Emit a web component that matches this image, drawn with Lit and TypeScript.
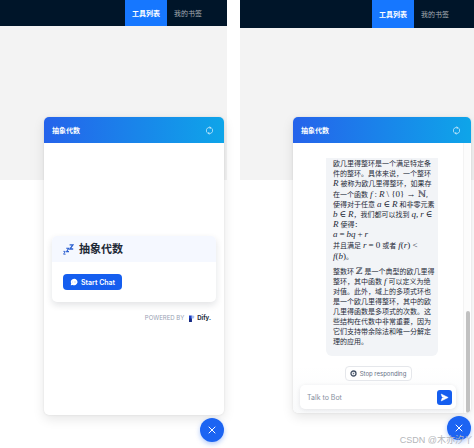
import { LitElement, html, css, svg } from "lit";
import { customElement, property } from "lit/decorators.js";

const refreshIcon = svg`<path d="M1.9 6.8A4.1 4.1 0 0 1 7.6 2.2M10.1 5.2A4.1 4.1 0 0 1 4.4 9.8M6.6 1l1.3 1.3-1.3 1.3M5.4 8.4L4.1 9.7l1.3 1.3M9.2 3.4l.6 1M2.8 8.6l-.6-1" fill="none" stroke="#fff" stroke-opacity=".9" stroke-width=".9" stroke-linecap="round"/>`;

@customElement("chat-widget")
export class ChatWidget extends LitElement {
  @property() heading = "";

  static styles = css`
    :host {
      display: flex;
      flex-direction: column;
      align-items: flex-end;
      gap: 3px;
    }
    .panel {
      flex: 1;
      width: 100%;
      box-sizing: border-box;
      display: flex;
      flex-direction: column;
      min-height: 0;
      overflow: hidden;
      background: #fff;
      border-radius: 5px;
      box-shadow: 0 4px 12px rgba(0, 0, 0, 0.1), 0 0 2px rgba(0, 0, 0, 0.1);
    }
    .bar {
      display: flex;
      align-items: center;
      justify-content: space-between;
      height: 26px;
      flex: none;
      padding: 0 10px 0 8px;
      color: #fff;
      background: linear-gradient(to right, #2563eb, #0ea5e9);
    }
    h2 {
      margin: 0;
      font-size: 7px;
      font-weight: 700;
    }
    button {
      padding: 0;
      border: 0;
      background: none;
      display: grid;
      place-items: center;
    }
    .body {
      flex: 1;
      min-height: 0;
      display: flex;
      flex-direction: column;
    }
    .close {
      width: 24px;
      height: 24px;
      flex: none;
      border-radius: 50%;
      background: #1c64f2;
      box-shadow: 0 2px 5px rgba(28, 100, 242, 0.35);
    }
  `;

  render() {
    return html`
      <section class="panel">
        <header class="bar">
          <h2>${this.heading}</h2>
          <button aria-label="Restart">
            <svg width="9" height="9" viewBox="0 0 12 12">${refreshIcon}</svg>
          </button>
        </header>
        <div class="body"><slot></slot></div>
      </section>
      <button class="close" aria-label="Close chat">
        <svg width="8" height="8" viewBox="0 0 8 8">
          <path d="M1 1l6 6M7 1L1 7" stroke="#fff" stroke-width="1" stroke-linecap="round" />
        </svg>
      </button>
    `;
  }
}

@customElement("app-root")
export class AppRoot extends LitElement {
  static styles = css`
    :host {
      display: grid;
      grid-template-columns: 227fr 234fr;
      gap: 13px;
      min-height: 100vh;
      background: #fff;
      font-family: Inter, "Noto Sans CJK SC", sans-serif;
    }
    .screen {
      position: relative;
      min-width: 0;
    }
    nav {
      display: flex;
      justify-content: flex-end;
      height: 26px;
      padding-right: 18px;
      background: #001529;
    }
    .second nav {
      height: 28px;
    }
    nav a {
      display: flex;
      align-items: center;
      padding: 0 7px;
      font-size: 7px;
      color: #a6adb4;
      text-decoration: none;
    }
    nav a.active {
      color: #fff;
      font-weight: 700;
      background: #1677ff;
    }
    .backdrop {
      height: 154px;
      background: #f3f3f3;
    }
    .second .backdrop {
      height: 152px;
    }
    chat-widget {
      position: absolute;
      inset: 117px 3px 6px 44px;
    }
    .second chat-widget {
      inset: 117px 3px 8px 53px;
    }
    button {
      font-family: inherit;
      border: 0;
      padding: 0;
    }

    .welcome {
      margin: auto 8px;
    }
    .card {
      border-radius: 5px;
      overflow: hidden;
      box-shadow: 0 3px 7px rgba(16, 24, 40, 0.12);
    }
    .card-head {
      display: flex;
      align-items: center;
      gap: 5px;
      height: 26px;
      padding: 0 11px;
      background: #f5f8ff;
    }
    h1 {
      margin: 0;
      font-size: 11px;
      line-height: 16px;
      font-weight: 600;
      color: #1f2a37;
    }
    .card-body {
      padding: 12px 11px;
    }
    .start {
      display: flex;
      align-items: center;
      justify-content: center;
      gap: 3px;
      width: 59px;
      height: 16px;
      border-radius: 4px;
      background: #155eef;
      color: #fff;
      font-size: 7px;
      font-weight: 600;
      white-space: nowrap;
    }
    .powered {
      display: flex;
      justify-content: flex-end;
      align-items: center;
      gap: 5px;
      margin-top: 12px;
      padding-right: 5px;
      font-size: 6px;
      line-height: 8px;
      color: #98a2b3;
    }
    .powered a {
      display: flex;
      align-items: center;
      gap: 2px;
      color: #1d2939;
      font-weight: 700;
      text-decoration: none;
    }

    .row {
      display: flex;
      flex: 1;
      min-height: 0;
    }
    .main {
      flex: 1;
      min-width: 0;
      min-height: 0;
      display: flex;
      flex-direction: column;
    }
    .log {
      flex: 1;
      min-height: 0;
      display: flex;
      padding-top: 15px;
    }
    .bubble {
      flex: 1;
      align-self: flex-start;
      margin: 0 25px 0 33px;
      padding: 1px 0 9px 7px;
      border-radius: 0 0 6px 6px;
      background: #f2f4f7;
      color: #1f2a37;
      font-size: 7px;
      line-height: 10px;
      white-space: nowrap;
    }
    .bubble p {
      margin: 0 0 5px;
    }
    .bubble p:last-child {
      margin: 0;
    }
    .line {
      display: block;
      height: 10px;
    }
    .line.tall {
      height: 11px;
      line-height: 11px;
    }
    .bubble i,
    .bubble b {
      font-family: "Liberation Serif", "DejaVu Serif", serif;
      font-size: 9px;
      line-height: 8px;
      font-weight: 400;
    }
    .track {
      display: flex;
      align-items: flex-end;
      width: 7px;
      margin-right: 1px;
      border-left: 1px solid #f3f3f3;
      box-sizing: border-box;
      background: #fcfcfc;
    }
    .thumb {
      width: 4px;
      height: 102px;
      margin-left: 2px;
      border-radius: 2px;
      background: #c1c1c1;
    }
    .composer {
      display: flex;
      flex-direction: column;
      align-items: center;
      gap: 4px;
      padding: 0 7px 4px;
      background: linear-gradient(to bottom, #fff, #f9fafb);
    }
    .stop {
      display: flex;
      align-items: center;
      justify-content: center;
      gap: 3px;
      width: 67px;
      height: 15px;
      box-sizing: border-box;
      border: 1px solid #e5e7eb;
      border-radius: 4px;
      background: #fff;
      color: #667085;
      font-size: 6px;
      white-space: nowrap;
    }
    .ask {
      display: flex;
      align-items: center;
      align-self: stretch;
      height: 24px;
      padding: 0 4px 0 7px;
      border-radius: 5px;
      background: #fff;
      box-shadow: 0 1px 4px rgba(16, 24, 40, 0.1);
    }
    .ask input {
      flex: 1;
      min-width: 0;
      padding: 0;
      border: 0;
      outline: 0;
      background: none;
      font: 7px Inter, sans-serif;
    }
    .ask input::placeholder {
      color: #8790a0;
    }
    .send {
      display: grid;
      place-items: center;
      width: 15px;
      height: 15px;
      border-radius: 3px;
      background: #155eef;
    }
    .mark {
      position: absolute;
      right: 1px;
      bottom: 1px;
      font: 9px/13px "Liberation Sans", "Noto Sans CJK SC", sans-serif;
      color: #b4b6ba;
      white-space: nowrap;
    }
  `;

  private nav() {
    return html`<nav><a class="active" href="#tools">工具列表</a><a href="#bookmarks">我的书签</a></nav>
      <div class="backdrop"></div>`;
  }

  render() {
    return html`
      <div class="screen">
        ${this.nav()}
        <chat-widget heading="抽象代数">
          <div class="welcome">
            <div class="card">
              <div class="card-head">
                <svg width="11" height="11" viewBox="0 0 11 11" fill="none" stroke="#2b5fd0">
                  <path d="M6.6 .8h3.3L6.9 5h3.3" stroke-width="1.3" />
                  <path d="M3.2 4.2h2.5L3.6 7.6H6" stroke-width="1.1" />
                  <path d="M.4 7.4h1.8L.6 10.2h2" stroke-width=".9" />
                </svg>
                <h1>抽象代数</h1>
              </div>
              <div class="card-body">
                <button class="start">
                  <svg width="8" height="8" viewBox="0 0 8 8">
                    <path d="M4.1.7a3.3 3.3 0 1 1-1.5 6.2L.7 7.3l.5-1.8A3.3 3.3 0 0 1 4.1.7z" fill="#fff" />
                    <path d="M2.6 4h.4M4 4h.4M5.4 4h.4" stroke="#155eef" stroke-width=".6" />
                  </svg>
                  Start Chat
                </button>
              </div>
            </div>
            <div class="powered">
              POWERED BY
              <a href="#dify">
                <svg width="6" height="7" viewBox="0 0 6 7">
                  <path d="M0 .5h2.8V7H0z" fill="#1d3fc4" />
                  <path d="M0 3.5h2.8V7H0z" fill="#172a80" />
                  <path d="M2.8.5h1.4A1.4 1.4 0 0 1 5.4 2L4.6 3.6H2.8z" fill="#a9c3f5" />
                </svg>
                Dify.
              </a>
            </div>
          </div>
        </chat-widget>
      </div>

      <div class="screen second">
        ${this.nav()}
        <chat-widget heading="抽象代数">
          <div class="row">
            <div class="main">
              <div class="log">
                <article class="bubble">
                  <p>
                    <span class="line">欧几里得整环是一个满足特定条</span>
                    <span class="line">件的整环。具体来说，一个整环</span>
                    <span class="line"><i>R</i> 被称为欧几里得整环，如果存</span>
                    <span class="line tall">在一个函数 <i>f</i> <b>:</b> <i>R</i> <b>\\ {0} → ℕ</b>,</span>
                    <span class="line">使得对于任意 <i>a</i> <b>∈</b> <i>R</i> 和非零元素</span>
                    <span class="line"><i>b</i> <b>∈</b> <i>R</i>，我们都可以找到 <i>q</i><b>,</b> <i>r</i> <b>∈</b></span>
                    <span class="line"><i>R</i> 使得：</span>
                    <span class="line"><i>a</i> <b>=</b> <i>bq</i> <b>+</b> <i>r</i></span>
                    <span class="line tall">并且满足 <i>r</i> <b>= 0</b> 或者 <i>f</i><b>(</b><i>r</i><b>) &lt;</b></span>
                    <span class="line tall"><i>f</i><b>(</b><i>b</i><b>)</b>。</span>
                  </p>
                  <p>
                    <span class="line">整数环 <b>ℤ</b> 是一个典型的欧几里得</span>
                    <span class="line">整环，其中函数 <i>f</i> 可以定义为绝</span>
                    <span class="line">对值。此外，域上的多项式环也</span>
                    <span class="line">是一个欧几里得整环，其中的欧</span>
                    <span class="line">几里得函数是多项式的次数。这</span>
                    <span class="line">些结构在代数中非常重要，因为</span>
                    <span class="line">它们支持带余除法和唯一分解定</span>
                    <span class="line">理的应用。</span>
                  </p>
                </article>
              </div>
              <div class="composer">
                <button class="stop">
                  <svg width="7" height="7" viewBox="0 0 7 7">
                    <circle cx="3.5" cy="3.5" r="2.5" fill="#fff" stroke="#475467" stroke-width="1.3" />
                    <path d="M2.8 2.8h1.4v1.4H2.8z" fill="#667085" />
                  </svg>
                  Stop responding
                </button>
                <div class="ask">
                  <input type="text" placeholder="Talk to Bot" aria-label="Talk to Bot" />
                  <button class="send" aria-label="Send">
                    <svg width="9" height="9" viewBox="0 0 9 9">
                      <path d="M1.2 1L8.2 4.5 1.2 8 2.1 5.1 4.6 4.5 2.1 3.9z" fill="#fff" stroke="#fff" stroke-width=".5" stroke-linejoin="round" />
                    </svg>
                  </button>
                </div>
              </div>
            </div>
            <div class="track"><div class="thumb"></div></div>
          </div>
        </chat-widget>
        <span class="mark">CSDN @木亦汐丫</span>
      </div>
    `;
  }
}
